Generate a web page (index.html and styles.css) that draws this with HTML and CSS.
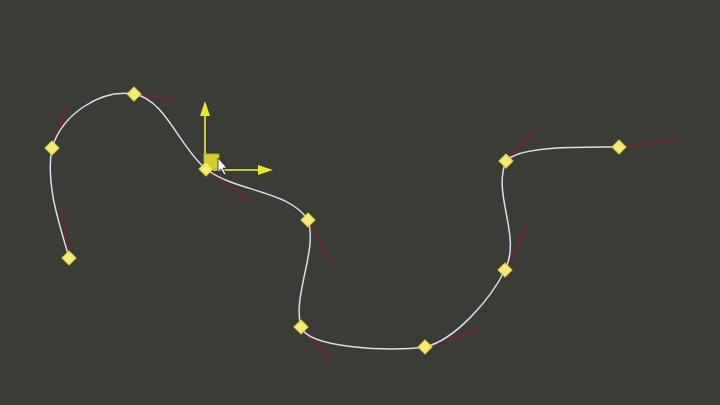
FILE: index.html
```html
<!DOCTYPE html>
<html>
<head>
<meta charset="utf-8">
<link rel="stylesheet" href="styles.css">
</head>
<body>
<div class="viewport">
<svg class="scene" width="720" height="405" viewBox="0 0 720 405">
  <g class="handles">
    <line x1="69" y1="258" x2="61" y2="212"/>
    <line x1="52" y1="148" x2="66" y2="108"/>
    <line x1="134" y1="94" x2="173" y2="100"/>
    <line x1="206" y1="169" x2="248" y2="200"/>
    <line x1="308" y1="220" x2="331" y2="262"/>
    <line x1="301" y1="327" x2="331" y2="360"/>
    <line x1="425" y1="347" x2="478" y2="330"/>
    <line x1="505" y1="270" x2="527" y2="226"/>
    <line x1="506" y1="161" x2="535" y2="131"/>
    <line x1="619" y1="147" x2="673" y2="140"/>
  </g>
  <path class="curve" d="M69,258 C60,225 45,185 52,148 C62,115 99,89 134,94 C165,99 180,148 206,169 C236,192 289,190 308,220 C318,250 292,296 301,327 C308,348 390,352 425,347 C455,340 490,300 505,270 C522,236 492,195 506,161 C520,145 590,147 619,147"/>
  <g class="gizmo">
    <line x1="205" y1="168" x2="205" y2="114"/>
    <polygon points="205,101 200,116 210,116"/>
    <line x1="213" y1="170" x2="258" y2="170"/>
    <polygon points="273,170 258,165 258,175"/>
    <rect class="gbox" x="204" y="154" width="15" height="15"/>
  </g>
  <g class="knots">
    <rect x="64" y="253" width="10" height="10" transform="rotate(45 69 258)"/>
    <rect x="47" y="143" width="10" height="10" transform="rotate(45 52 148)"/>
    <rect x="129" y="89" width="10" height="10" transform="rotate(45 134 94)"/>
    <rect x="201" y="164" width="10" height="10" transform="rotate(45 206 169)"/>
    <rect x="303" y="215" width="10" height="10" transform="rotate(45 308 220)"/>
    <rect x="296" y="322" width="10" height="10" transform="rotate(45 301 327)"/>
    <rect x="420" y="342" width="10" height="10" transform="rotate(45 425 347)"/>
    <rect x="500" y="265" width="10" height="10" transform="rotate(45 505 270)"/>
    <rect x="501" y="156" width="10" height="10" transform="rotate(45 506 161)"/>
    <rect x="614" y="142" width="10" height="10" transform="rotate(45 619 147)"/>
  </g>
  <path class="cursor" d="M218,158 L218,172 L221,169 L224,175 L226,174 L223,168 L227,168 Z"/>
</svg>
</div>
</body>
</html>
```
FILE: styles.css
```css
html, body {
  margin: 0;
  padding: 0;
  background: #3c3c37;
  font-family: "Liberation Sans", Arial, sans-serif;
}
.viewport {
  width: 720px;
  height: 405px;
  overflow: hidden;
  background: #3c3c37;
}
.scene {
  display: block;
}
.handles line {
  stroke: #672a34;
  stroke-width: 3;
  stroke-linecap: round;
  opacity: 0.85;
}
.curve {
  fill: none;
  stroke: #dcdcf0;
  stroke-width: 1.5;
}
.gizmo line {
  stroke: #c9c940;
  stroke-width: 2;
}
.gizmo polygon {
  fill: #e8e830;
}
.gizmo .gbox {
  fill: #d8cc30;
  stroke: #b8a820;
  stroke-width: 1;
}
.knots rect {
  fill: #f4ea74;
  stroke: #d6c840;
  stroke-width: 1;
}
.cursor {
  fill: #ffffff;
  stroke: #222222;
  stroke-width: 0.8;
}
```
